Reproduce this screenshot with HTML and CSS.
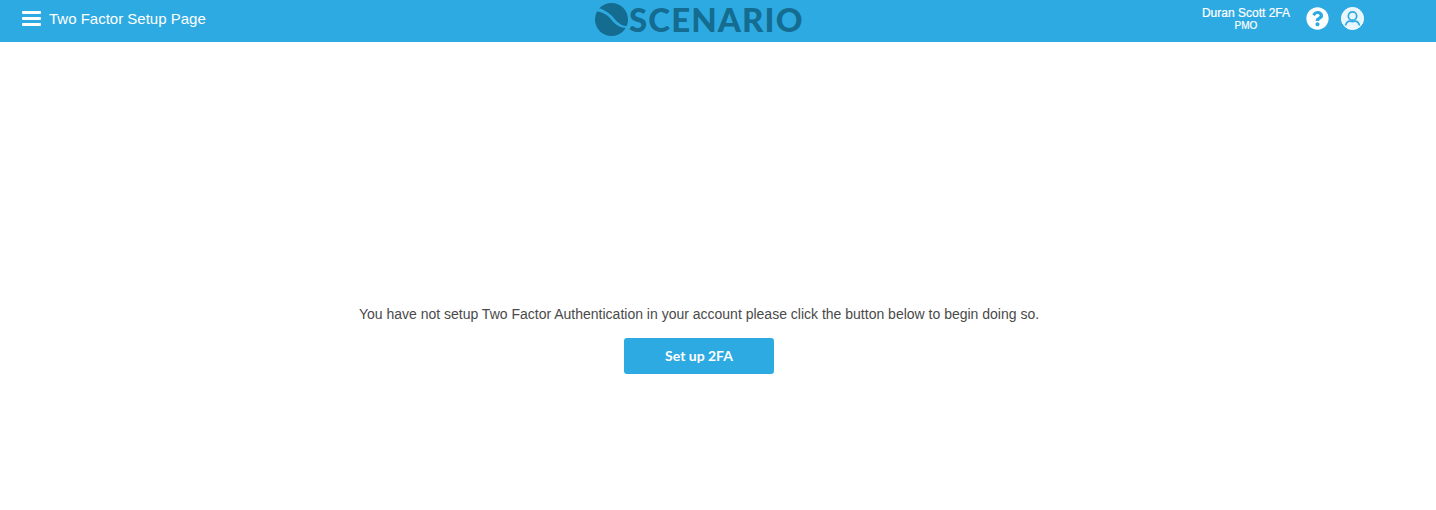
FILE: index.html
```html
<!DOCTYPE html>
<html lang="en">
<head>
<meta charset="utf-8">
<title>Two Factor Setup Page</title>
<link rel="stylesheet" href="styles.css">
</head>
<body>
<header class="topbar">
  <div class="topbar-left">
    <svg class="menu-icon" width="19" height="15" viewBox="0 0 19 15" aria-hidden="true"><rect width="19" height="3" rx="1"/><rect y="6" width="19" height="3" rx="1"/><rect y="12" width="19" height="3" rx="1"/></svg>
    <span class="page-title">Two Factor Setup Page</span>
  </div>
  <div class="logo">
    <svg class="logo-mark" width="33" height="33" viewBox="0 0 33 33" aria-hidden="true">
      <circle cx="16.5" cy="16.5" r="16.5" fill="#146c90"/>
      <path d="M1 8C7 9 11 11 15 15C19 20 24 26 32 24.500L32 23C26 23.500 21 18 17 13C13 9 8 6 3 5Z" fill="#2eaae2"/>
    </svg>
    <span class="logo-text">SCENARIO</span>
  </div>
  <div class="topbar-right">
    <div class="user">
      <div class="user-name">Duran Scott 2FA</div>
      <div class="user-role">PMO</div>
    </div>
    <svg class="round-icon" width="23" height="23" viewBox="0 0 512 512" aria-hidden="true"><path fill="#fff" d="M504 256c0 137-111 248-248 248S8 393 8 256 119 8 256 8s248 111 248 248zM262.700 90c-54.500 0-89.300 23-116.500 63.800-3.500 5.300-2.400 12.400 2.700 16.300l34.700 26.300c5.200 3.900 12.600 3 16.700-2.100 17.900-22.700 30.100-35.800 57.300-35.800 20.400 0 45.700 13.100 45.700 32.900 0 15-12.400 22.700-32.500 34-23.500 13.200-54.600 29.600-54.600 70.600V300c0 6.600 5.400 12 12 12h56c6.600 0 12-5.400 12-12v-1.300c0-28.400 83-29.600 83-106.500C379.200 134.300 319 90 262.700 90zM256 338c-25.300 0-45.900 20.600-45.900 45.900 0 25.300 20.600 45.900 45.900 45.900s45.900-20.600 45.900-45.900c0-25.300-20.600-45.900-45.900-45.900z"/></svg>
    <svg class="round-icon" width="23" height="23" viewBox="0 0 23 23" aria-hidden="true">
      <circle cx="11.5" cy="11.5" r="11" fill="#e8f6fc" stroke="#fff"/>
      <circle cx="11.500" cy="9" r="4.200" fill="none" stroke="#2eaae2" stroke-width="1.700"/>
      <path d="M4.500 18.500C5.500 15 8 14 9.500 14.200C11 14.800 12 14.800 13.500 14.200C15 14 17.500 15 18.500 18.500" fill="none" stroke="#2eaae2" stroke-width="1.700"/>
    </svg>
  </div>
</header>
<main class="content">
  <p class="message">You have not setup Two Factor Authentication in your account please click the button below to begin doing so.</p>
  <button class="primary-btn" type="button">Set up 2FA</button>
</main>
</body>
</html>
```
FILE: styles.css
```css
* { box-sizing: border-box; }
html, body { margin: 0; height: 100%; background: #fff; }
body { font-family: "Liberation Sans", Arial, sans-serif; overflow: hidden; }

.topbar {
  height: 42px;
  background: #2eaae2;
  color: #fff;
  display: grid;
  grid-template-columns: 595px auto 1fr;
  align-items: center;
}
.topbar-left {
  display: flex;
  align-items: center;
  gap: 8px;
  padding-left: 22px;
  margin-top: -5px;
}
.menu-icon { fill: #fff; display: block; }
.page-title { font-size: 15px; line-height: 18px; }

.logo { display: flex; align-items: center; gap: 1px; height: 42px; color: #146c90; }
.logo-mark { display: block; margin-top: -4px; }
.logo-text {
  font-family: Lato, sans-serif;
  font-weight: 900;
  font-size: 33px;
  line-height: 36px;
  letter-spacing: 1.1px;
  margin-top: -4px;
}

.topbar-right {
  display: flex;
  align-items: center;
  justify-content: flex-end;
  padding-right: 72px;
  gap: 12px;
}
.user { text-align: center; font-weight: 400; margin-right: 4px; margin-top: -3px; -webkit-text-stroke: 0.2px #fff; }
.user-name { font-size: 12px; line-height: 13px; }
.user-role { font-size: 10px; line-height: 12px; }
.round-icon { display: block; margin-top: -5px; }

.content {
  height: 468px;
  padding: 263px 38px 0 0;
  display: flex;
  flex-direction: column;
  align-items: center;
}
.message {
  margin: 0;
  font-size: 14px;
  line-height: 18px;
  color: #4a4a4a;
  white-space: nowrap;
}
.primary-btn {
  margin-top: 14.5px;
  width: 150px;
  height: 36px;
  border: 0;
  border-radius: 3px;
  background: #2eaae2;
  color: #fff;
  font-family: Lato, sans-serif;
  font-weight: 700;
  font-size: 14px;
}
```
